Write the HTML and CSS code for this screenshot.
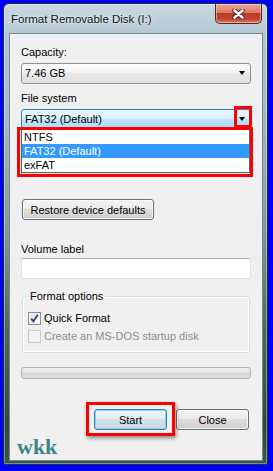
FILE: index.html
```html
<!DOCTYPE html>
<html lang="en">
<head>
    <meta charset="UTF-8">
    <meta name="viewport" content="width=device-width, initial-scale=1.0">
    <title>Format Removable Disk (I:)</title>
    <link rel="stylesheet" href="styles.css">
</head>
<body>

<div class="window">
    <div class="titlebar">
        <span class="title">Format Removable Disk (I:)</span>
        <span class="close-btn">
            <svg width="13" height="10" viewBox="0 0 13 10">
                <path d="M2.5 1.5 L10.5 8.5 M10.5 1.5 L2.5 8.5" stroke="#4a2020" stroke-width="4.4" stroke-linecap="round"/>
                <path d="M2.5 1.5 L10.5 8.5 M10.5 1.5 L2.5 8.5" stroke="#ffffff" stroke-width="2.6" stroke-linecap="round"/>
            </svg>
        </span>
    </div>

    <div class="client">
        <div class="field">
            <label>Capacity:</label>
            <div class="combo">7.46 GB<span class="arrow"></span></div>
        </div>

        <!-- file system: list dropped open, marked up in red -->
        <div class="field fs">
            <label>File system</label>
            <div class="combo hot">FAT32 (Default)<span class="arrow"></span></div>
            <div class="droplist">
                <ul>
                    <li>NTFS</li>
                    <li class="selected">FAT32 (Default)</li>
                    <li>exFAT</li>
                </ul>
            </div>
        </div>

        <!-- allocation unit size, covered by the open list -->
        <div class="field covered">
            <div class="label-space"></div>
            <div class="combo"></div>
        </div>

        <button class="btn restore">Restore device defaults</button>

        <div class="field volume">
            <label>Volume label</label>
            <div class="textbox"></div>
        </div>

        <fieldset class="group">
            <legend>Format options</legend>
            <div class="check-row">
                <span class="checkbox">
                    <svg width="11" height="11" viewBox="0 0 11 11">
                        <path d="M2.2 5.6 L4.4 8.4 L8.8 1.8" fill="none" stroke="#2e4a8c" stroke-width="1.9"/>
                    </svg>
                </span>
                Quick Format
            </div>
            <div class="check-row disabled">
                <span class="checkbox"></span>
                Create an MS-DOS startup disk
            </div>
        </fieldset>

        <div class="progress"></div>

        <div class="actions">
            <button class="btn start">Start</button>
            <button class="btn">Close</button>
        </div>

        <div class="sig">wkk</div>
    </div>
</div>

</body>
</html>
```

FILE: styles.css
```css
body {
    font-family: "Liberation Sans", Arial, sans-serif;
    font-size: 11px;
    background-color: #0000ff;
    margin: 0;
    padding: 0;
    color: #000;
}
.window {
    margin: 3px;
    width: 265px;
    height: 462px;
    box-sizing: border-box;
    border: 1px solid #22303a;
    border-radius: 6px 6px 2px 2px;
    padding: 0 4px 3px 5px;
    display: flex;
    flex-direction: column;
    background: linear-gradient(to bottom, #c9d8e3 0, #b3c7d4 30px, #a3b8c3 120px, #7f9a94 230px, #4b6856 330px, #2f4a3a 420px, #3a5646 100%);
    box-shadow: inset 0 0 0 1px rgba(255, 255, 255, 0.35);
}
.titlebar {
    height: 29px;
    display: flex;
    justify-content: space-between;
    align-items: flex-start;
    padding-left: 2px;
}
.title {
    font-size: 11.5px;
    line-height: 14px;
    margin-top: 8px;
    color: #111;
    text-shadow: 0 0 6px rgba(255, 255, 255, 0.9), 0 0 2px rgba(255, 255, 255, 0.8);
}
.close-btn {
    width: 47px;
    height: 20px;
    box-sizing: border-box;
    margin-right: 1px;
    border: 1px solid #4e2a28;
    border-top: none;
    border-radius: 0 0 5px 5px;
    background: linear-gradient(to bottom, #e9a999 0%, #d77a66 45%, #bb3624 50%, #c44630 80%, #dc8068 100%);
    box-shadow: inset 0 0 0 1px rgba(255, 220, 210, 0.5);
    display: flex;
    align-items: center;
    justify-content: center;
}
.client {
    flex: 1;
    background-color: #f0f0f0;
    border: 1px solid #76858f;
    padding: 11px 11px 0 11px;
    display: flex;
    flex-direction: column;
}
.field {
    position: relative;
    margin-bottom: 7px;
}
label {
    display: block;
    line-height: 14px;
    margin-bottom: 4px;
}
.label-space {
    height: 14px;
    margin-bottom: 4px;
}
.combo {
    position: relative;
    height: 21px;
    box-sizing: border-box;
    border: 1px solid #8e8f8f;
    border-radius: 3px;
    background: linear-gradient(to bottom, #fcfcfc 0%, #f2f2f2 50%, #e8e8e8 50%, #e0e0e0 100%);
    padding-left: 3px;
    line-height: 19px;
}
.arrow {
    position: absolute;
    right: 5px;
    top: 7px;
    width: 0;
    height: 0;
    border-left: 3.5px solid transparent;
    border-right: 3.5px solid transparent;
    border-top: 4px solid #000;
}
.combo.hot {
    border-color: #3c7fb1;
    background: linear-gradient(to bottom, #eaf6fd 0%, #d9f0fc 50%, #bee6fd 50%, #a7d9f5 100%);
}
/* red marker round the drop arrow */
.combo.hot::after {
    content: "";
    position: absolute;
    left: 212px;
    top: -4px;
    width: 18px;
    height: 22px;
    box-sizing: border-box;
    border: 3px solid #f00;
}
.droplist {
    position: absolute;
    z-index: 2;
    left: -4px;
    top: 36px;
    width: 236px;
    height: 50px;
    box-sizing: border-box;
    border: 3px solid #f00;
}
.droplist ul {
    list-style: none;
    margin: 0 0 0 1px;
    padding: 0;
    background-color: #fff;
    border: 1px solid #646464;
    border-top: none;
}
.droplist li {
    line-height: 14px;
    padding-left: 2px;
}
.droplist li.selected {
    background-color: #3399ff;
    color: #fff;
}
.btn {
    height: 21px;
    box-sizing: border-box;
    border: 1px solid #707070;
    border-radius: 3px;
    background: linear-gradient(to bottom, #f2f2f2 0%, #ebebeb 50%, #dddddd 50%, #cfcfcf 100%);
    box-shadow: inset 0 0 0 1px rgba(255, 255, 255, 0.75);
    font-family: "Liberation Sans", Arial, sans-serif;
    font-size: 11px;
    color: #000;
    padding: 0;
}
.restore {
    width: 132px;
    margin: 16px 0 0 1px;
    align-self: flex-start;
}
.volume {
    margin: 22px 0 0 0;
}
.volume label {
    margin-bottom: 2px;
}
.textbox {
    height: 21px;
    box-sizing: border-box;
    background-color: #fff;
    border: 1px solid #dde2e8;
    border-top-color: #abadb3;
    border-radius: 2px;
}
.group {
    margin: 10px 1px 0 1px;
    min-width: 0;
    padding: 6px 5px 7px 5px;
    border: 1px solid #d5dfe5;
    border-radius: 3px;
    box-shadow: inset 0 0 0 1px #fff;
}
.group legend {
    padding: 0 2px;
    line-height: 14px;
}
.check-row {
    height: 18px;
    display: flex;
    align-items: center;
    gap: 3px;
}
.checkbox {
    width: 13px;
    height: 13px;
    box-sizing: border-box;
    border: 1px solid #8e8f8f;
    background: linear-gradient(135deg, #dcdcdc 0%, #f4f4f4 60%, #ffffff 100%);
    box-shadow: inset 0 0 0 1px #f4f4f4;
    display: flex;
    align-items: center;
    justify-content: center;
}
.check-row.disabled {
    color: #8d8d8d;
}
.check-row.disabled .checkbox {
    border-color: #c8c8c8;
    background: #f4f4f4;
}
.progress {
    margin-top: 14px;
    height: 12px;
    box-sizing: border-box;
    border: 1px solid #b2b2b2;
    border-radius: 3px;
    background: linear-gradient(to bottom, #f3f3f3 0%, #e6e6e6 40%, #d4d4d4 60%, #e4e4e4 100%);
}
.actions {
    margin-top: 30px;
    display: flex;
    justify-content: flex-end;
    gap: 9px;
    padding-right: 2px;
}
.actions .btn {
    width: 73px;
}
.start {
    position: relative;
    border-color: #3c7fb1;
    background: linear-gradient(to bottom, #ecf4f8 0%, #e3edf2 50%, #d4e1e8 50%, #cad9e1 100%);
    box-shadow: inset 0 0 0 1px #7fd6f6;
}
/* red marker round Start */
.start::after {
    content: "";
    position: absolute;
    left: -9px;
    right: -9px;
    top: -8px;
    bottom: -7px;
    border: 3px solid #f00;
    box-shadow: 1px 2px 4px rgba(0, 0, 0, 0.45);
}
.sig {
    margin: 6px 0 0 -4px;
    font-family: "Liberation Serif", "Times New Roman", serif;
    font-weight: bold;
    font-size: 22px;
    line-height: 22px;
    color: #3f8585;
}
```
